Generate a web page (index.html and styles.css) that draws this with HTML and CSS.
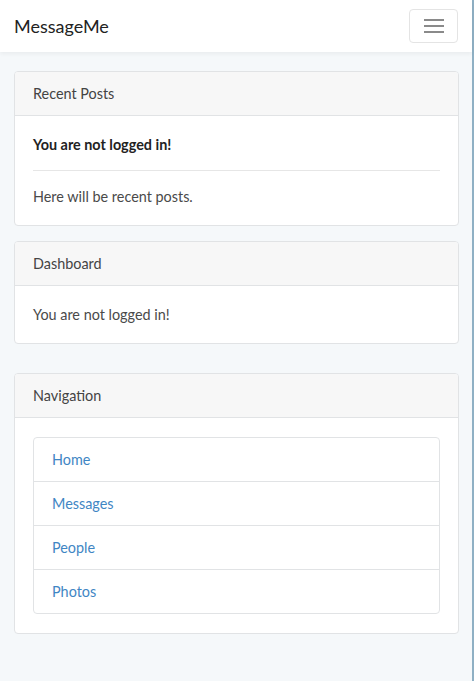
FILE: index.html
```html
<!DOCTYPE html>
<html lang="en">
<head>
<meta charset="utf-8">
<title>MessageMe</title>
<link rel="stylesheet" href="styles.css">
</head>
<body>
<div class="page">
  <div class="app">
    <nav class="navbar">
      <a class="brand" href="#">MessageMe</a>
      <button class="toggler" type="button" aria-label="Toggle navigation">
        <svg width="20" height="16" viewBox="0 0 20 16"><path d="M0 2h20M0 8h20M0 14h20" stroke="#8a8a8a" stroke-width="2"/></svg>
      </button>
    </nav>
    <main class="main">
      <section class="card card-posts">
        <div class="card-header">Recent Posts</div>
        <div class="card-body">
          <p class="strong">You are not logged in!</p>
          <hr class="divider">
          <p>Here will be recent posts.</p>
        </div>
      </section>
      <section class="card card-dash">
        <div class="card-header">Dashboard</div>
        <div class="card-body">
          <p>You are not logged in!</p>
        </div>
      </section>
      <section class="card card-nav">
        <div class="card-header">Navigation</div>
        <div class="card-body card-body-list">
          <ul class="list-group">
            <li class="list-item"><a href="#">Home</a></li>
            <li class="list-item"><a href="#">Messages</a></li>
            <li class="list-item"><a href="#">People</a></li>
            <li class="list-item"><a href="#">Photos</a></li>
          </ul>
        </div>
      </section>
    </main>
  </div>
  <div class="edge"></div>
</div>
</body>
</html>
```
FILE: styles.css
```css
* { box-sizing: border-box; }
html, body { margin: 0; padding: 0; height: 100%; }
body {
  font-family: Lato, "Open Sans", "Liberation Sans", sans-serif;
  font-size: 14.4px;
  line-height: 19px;
  color: #212529;
  background: #f5f8fa;
}
.page { display: flex; min-height: 100%; }
.app { flex: 1; min-width: 0; }
.edge { width: 2px; background: #8fb0c4; }
.navbar {
  height: 52px;
  background: #fff;
  display: flex;
  align-items: center;
  justify-content: space-between;
  padding: 0 14px 0 14px;
  box-shadow: 0 2px 4px rgba(0,0,0,0.05);
  position: relative;
}
.brand {
  font-size: 18px;
  color: #222;
  text-decoration: none;
}
.toggler {
  width: 49px;
  height: 34px;
  border: 1px solid #e4e4e4;
  border-radius: 4px;
  background: #fff;
  display: flex;
  align-items: center;
  justify-content: center;
  padding: 0;
}
.main { padding: 19px 13px 24px 14px; }
.card {
  background: #fff;
  border: 1px solid #e1e3e5;
  border-radius: 4px;
  overflow: hidden;
}
.card-posts { margin-bottom: 15px; }
.card-dash { margin-bottom: 29px; }
.card-header {
  background: #f7f7f7;
  border-bottom: 1px solid #e1e3e5;
  padding: 12px 18px;
  color: #444;
}
.card-body { padding: 19px 18px; }
.card-body p { margin: 0; color: #4a4a4a; }
.card-body p.strong { font-weight: 700; color: #222; }
.divider {
  border: 0;
  border-top: 1px solid #e6e6e6;
  margin: 16px 0;
}
.list-group {
  list-style: none;
  margin: 0;
  padding: 0;
  border: 1px solid #e1e3e5;
  border-radius: 4px;
}
.list-item {
  padding: 12px 18px;
  border-bottom: 1px solid #e1e3e5;
}
.list-item:last-child { border-bottom: 0; }
.list-item a { color: #3f86c4; text-decoration: none; }
```
